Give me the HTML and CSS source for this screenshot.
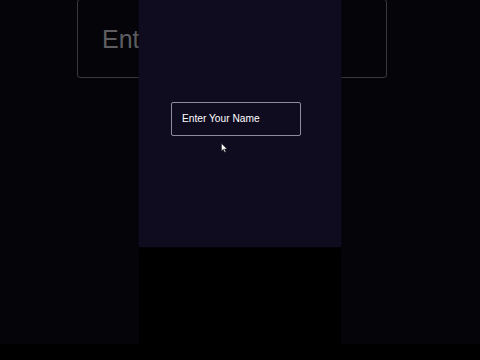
FILE: index.html
```html
<!DOCTYPE html>
<html lang="en">
<head>
<meta charset="utf-8">
<title>Enter Your Name</title>
<link rel="stylesheet" href="styles.css">
</head>
<body>
  <div class="frame">
    <div class="backdrop">
      <div class="ghost-box"><span class="ghost-text">Enter Your Name</span></div>
    </div>
    <div class="video">
      <div class="panel">
        <div class="name-input">Enter Your Name</div>
        <svg class="cursor" width="7" height="10" viewBox="0 0 7 10" aria-hidden="true">
          <path d="M0.5 0.5 L0.5 8 L2.3 6.3 L3.6 9.2 L4.8 8.7 L3.5 5.9 L6 5.9 Z" fill="#ffffff" stroke="#222" stroke-width="0.5"/>
        </svg>
      </div>
    </div>
  </div>
  <div class="bottom-bar"></div>
</body>
</html>
```
FILE: styles.css
```css
html, body {
  margin: 0;
  padding: 0;
  background: #000000;
  width: 480px;
  height: 360px;
  overflow: hidden;
  font-family: "Liberation Sans", Arial, sans-serif;
}

.frame {
  position: relative;
  height: 345px;
  background: #050409;
}

.ghost-box {
  margin-left: 77px;
  margin-top: -1px;
  width: 310px;
  height: 79px;
  box-sizing: border-box;
  border: 1px solid #3a393f;
  border-radius: 3px;
  display: flex;
  align-items: center;
  padding-left: 24px;
}

.ghost-text {
  font-size: 25px;
  color: #5e5e62;
  white-space: nowrap;
  margin-top: 1px;
}

.video {
  position: absolute;
  left: 139px;
  top: 0;
  width: 202px;
  height: 345px;
  background: #000000;
}

.panel {
  position: relative;
  height: 248px;
  background: #0f0c1f;
  padding-top: 103px;
  padding-left: 32px;
  box-sizing: border-box;
  box-shadow: 0 0 3px #0b0917;
}

.name-input {
  width: 130px;
  height: 34px;
  box-sizing: border-box;
  border: 1px solid #8d8c9c;
  border-radius: 2px;
  color: #ffffff;
  font-size: 10.2px;
  line-height: 32px;
  padding-left: 10px;
  white-space: nowrap;
}

.cursor {
  position: absolute;
  left: 82px;
  top: 144px;
}

.bottom-bar {
  height: 15px;
  background: #000000;
}
```
